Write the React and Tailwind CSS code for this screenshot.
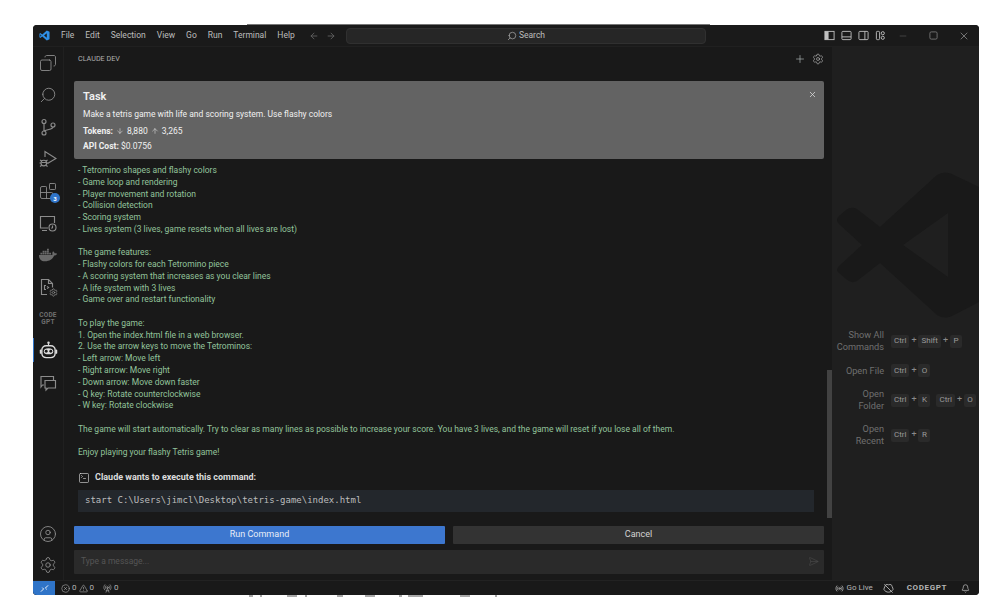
import React from 'react';
import { ArrowLeft, ArrowRight, ArrowDown, ArrowUp, Search, X, Plus, Settings, Minus, Copy, Blocks, CircleUser, CircleX, TriangleAlert, RadioTower, Radio, SendHorizontal, SquareTerminal, Bell } from 'lucide-react';
import { FaDocker } from 'react-icons/fa';

const menus = ['File', 'Edit', 'Selection', 'View', 'Go', 'Run', 'Terminal', 'Help'];

const chatLines = [
  '- Tetromino shapes and flashy colors',
  '- Game loop and rendering',
  '- Player movement and rotation',
  '- Collision detection',
  '- Scoring system',
  '- Lives system (3 lives, game resets when all lives are lost)',
  '',
  'The game features:',
  '- Flashy colors for each Tetromino piece',
  '- A scoring system that increases as you clear lines',
  '- A life system with 3 lives',
  '- Game over and restart functionality',
  '',
  'To play the game:',
  '1. Open the index.html file in a web browser.',
  '2. Use the arrow keys to move the Tetrominos:',
  '- Left arrow: Move left',
  '- Right arrow: Move right',
  '- Down arrow: Move down faster',
  '- Q key: Rotate counterclockwise',
  '- W key: Rotate clockwise',
  '',
  'The game will start automatically. Try to clear as many lines as possible to increase your score. You have 3 lives, and the game will reset if you lose all of them.',
  '',
  'Enjoy playing your flashy Tetris game!',
];

// bits of the page behind the window that stick out under it
const strayMarks = [[249, 4], [260, 2], [287, 10], [305, 2], [337, 6], [365, 10], [399, 3], [408, 15], [460, 10], [495, 2]];

const VsLogo = ({ className }) => (
  <svg viewBox="0 0 100 100" className={className}>
    <path fill="currentColor" fillRule="evenodd" d="M71 4 L96 16 V84 L71 96 L30 58 L12 72 L4 67 V33 L12 28 L30 42 Z M71 29 L46 50 L71 71 Z M12 39 V61 L22 50 Z" />
  </svg>
);

const Watermark = () => (
  <svg viewBox="0 0 147 170" className="absolute left-0 top-[113px] w-[147px] h-[170px] text-[#191919]">
    <path fill="currentColor" fillRule="evenodd" d="M48 67 L105 15 Q113 10 122 15 L147 27 V142 L122 155 Q113 160 105 155 L48 103 L25 121 Q19 124 14 119 L7 113 Q3 110 7 106 L30 85 L7 64 Q3 60 7 56 L14 50 Q19 46 25 49 Z M71 85 L116 53 V117 Z" />
  </svg>
);

const Key = ({ children }) => (
  <span className="h-[13px] min-w-[12px] px-[3px] bg-[#2a2a2a] rounded-[2px] flex items-center justify-center text-[8px] text-[#9a9a9a]">{children}</span>
);

const KeyPlus = () => <span className="w-[9px] text-center text-[9px] text-[#8a8a8a]">+</span>;

const Shortcut = ({ label, children }) => (
  <div className="flex items-center">
    <div className="w-[52px] text-right text-[9.2px] leading-[12px] text-[#6f6f6f] mr-[7px]">{label}</div>
    <div className="flex items-center h-[13px]">{children}</div>
  </div>
);

const GitIcon = () => (
  <svg viewBox="0 0 18 18" className="w-[18px] h-[18px] mt-[14px]" fill="none" stroke="currentColor" strokeWidth="1.15">
    <circle cx="5" cy="3.5" r="2" /><circle cx="5" cy="15" r="2" /><circle cx="14" cy="7" r="2" />
    <path d="M5 5.5V13M14 9c0 2.5-5 2-9 4" />
  </svg>
);

const DebugIcon = () => (
  <svg viewBox="0 0 18 18" className="w-[18px] h-[18px] mt-[14px]" fill="none" stroke="currentColor" strokeWidth="1.15">
    <path d="M6 7V1.5l11 7-8.5 5" />
    <circle cx="4.8" cy="13" r="2.8" />
    <path d="M1 10l1.8 1M8.6 10l-1.8 1M0.5 13h1.5M7.6 13h1.5M1 16.5l1.8-1.3M8.6 16.5l-1.8-1.3M2.5 12.5h4.5" />
  </svg>
);

const RemoteIcon = () => (
  <svg viewBox="0 0 18 18" className="w-[18px] h-[18px] mt-[14px]" fill="none" stroke="currentColor" strokeWidth="1.15">
    <path d="M9 14H1.5V2.5h14V9" />
    <path d="M3 16.5h5" />
    <circle cx="13.5" cy="13.5" r="3.5" />
    <path d="M13.5 11.5v2l-1 1" />
  </svg>
);

const DocGearIcon = () => (
  <div className="relative w-[18px] h-[18px] mt-[14px]">
    <svg viewBox="0 0 18 18" className="w-[18px] h-[18px]" fill="none" stroke="currentColor" strokeWidth="1.15">
      <path d="M8 16.5H2.5V1.5h7l4 4v4" />
      <path d="M9.5 1.5v4h4" />
      <path d="M7 7.5H5.5v4H7M8 8.5l1.5 1-1.5 1" />
    </svg>
    <Settings className="absolute -right-[1px] -bottom-[1px] w-[9px] h-[9px]" strokeWidth={2} />
  </div>
);

const BotIcon = () => (
  <svg viewBox="0 0 20 20" className="w-[19px] h-[19px] text-[#dcdcdc]" fill="none">
    <circle cx="10" cy="1.8" r="1.3" fill="currentColor" />
    <path d="M10 3v2" stroke="currentColor" strokeWidth="1.2" />
    <rect x="3" y="5" width="14" height="12.5" rx="4.5" stroke="currentColor" strokeWidth="1.5" />
    <rect x="0.8" y="9" width="1.8" height="4.5" rx="0.9" fill="currentColor" />
    <rect x="17.4" y="9" width="1.8" height="4.5" rx="0.9" fill="currentColor" />
    <path d="M5 11c0-2.5 2-3.5 5-3.5s5 1 5 3.5-2 3-5 3-5-.5-5-3z" fill="currentColor" />
    <circle cx="7.6" cy="10.8" r="1.5" fill="#191919" />
    <circle cx="12.4" cy="10.8" r="1.5" fill="#191919" />
  </svg>
);

const ChatIcon = () => (
  <svg viewBox="0 0 18 18" className="w-[18px] h-[18px] mt-[12px]" fill="none" stroke="currentColor" strokeWidth="1.15">
    <path d="M5 11H3.5l-1.5 2V2.5h12.5V6" />
    <path d="M6 6.5h10.5V14H9l-2 2v-2H6z" />
  </svg>
);

const RemoteStatusIcon = () => (
  <svg viewBox="0 0 10 10" className="w-[9px] h-[9px]" fill="none" stroke="currentColor" strokeWidth="1">
    <path d="M1 8.5 4 5.5 2.5 4M9 1.5 6 4.5 7.5 6" />
  </svg>
);

const CopilotOffIcon = () => (
  <svg viewBox="0 0 12 12" className="w-[11px] h-[11px] ml-[10px]" fill="none" stroke="currentColor" strokeWidth="1">
    <path d="M2 4c0-2 2-3 4-2 2-1 4 0 4 2 .5 1 1 2 1 3-1 2-3 3-5 3s-4-1-5-3c0-1 .5-2 1-3z" />
    <path d="M1.5 1.5l9 9" />
  </svg>
);

export default function App() {
  return (
    <div className="relative w-[1000px] h-[613px] bg-white pt-[25px] pl-[33px] overflow-hidden" style={{ fontFamily: 'Roboto, sans-serif' }}>
      <div className="absolute left-[247px] top-[24px] w-[463px] h-[1px] bg-[#777]"></div>
      {strayMarks.map(([x, w]) => (
        <div key={x} className="absolute top-[595px] h-[2px] bg-[#aaa]" style={{ left: x, width: w }}></div>
      ))}

      <div className="w-[946px] h-[570px] bg-[#191919] rounded-[4px] overflow-hidden flex flex-col">
        {/* title bar */}
        <div className="h-[22px] shrink-0 flex items-center bg-[#1a1a1a] border-b border-[#202020] text-[#bdbdbd] text-[8.5px]">
          <VsLogo className="w-[11px] h-[11px] text-[#2f8fe6] ml-[6px] mr-[11px]" />
          <div className="flex gap-[11px] w-[231px]">
            {menus.map(m => <span key={m}>{m}</span>)}
          </div>
          <ArrowLeft className="w-[10px] h-[10px] text-[#666] ml-[17px]" />
          <ArrowRight className="w-[10px] h-[10px] text-[#666] ml-[7px]" />
          <div className="ml-[10px] w-[360px] h-[16px] rounded-[4px] bg-[#262626] border border-[#303030] flex items-center justify-center gap-[2px]">
            <Search className="w-[10px] h-[10px] -scale-x-100" strokeWidth={1.5} />
            <span>Search</span>
          </div>
          <div className="ml-auto flex items-center gap-[6px] text-[#c0c0c0]">
            <svg viewBox="0 0 12 12" className="w-[11px] h-[11px]"><rect x="1" y="1.5" width="10" height="9" fill="none" stroke="currentColor" /><rect x="1" y="1.5" width="4" height="9" fill="currentColor" /></svg>
            <svg viewBox="0 0 12 12" className="w-[11px] h-[11px]"><rect x="1" y="1.5" width="10" height="9" rx="1" fill="none" stroke="currentColor" /><path d="M1 7.5h10" stroke="currentColor" /></svg>
            <svg viewBox="0 0 12 12" className="w-[11px] h-[11px]"><rect x="1" y="1.5" width="10" height="9" rx="1" fill="none" stroke="currentColor" /><path d="M7.5 1.5v9" stroke="currentColor" /></svg>
            <svg viewBox="0 0 12 12" className="w-[11px] h-[11px]"><rect x="1.5" y="1.5" width="3.5" height="9" rx="1" fill="none" stroke="currentColor" /><circle cx="8.5" cy="3.5" r="1.7" fill="none" stroke="currentColor" /><circle cx="8.5" cy="8.5" r="1.7" fill="none" stroke="currentColor" /></svg>
          </div>
          <Minus className="w-[10px] h-[10px] text-[#666] ml-[12px]" strokeWidth={1.25} />
          <svg viewBox="0 0 10 10" className="w-[9px] h-[9px] text-[#777] ml-[21px]" fill="none" stroke="currentColor"><rect x="1" y="1" width="8" height="8" rx="1.5" /></svg>
          <X className="w-[12px] h-[12px] text-[#aaa] ml-[20px] mr-[9px]" strokeWidth={1.25} />
        </div>

        <div className="flex-1 flex min-h-0">
          {/* activity bar */}
          <div className="w-[31px] shrink-0 flex flex-col items-center bg-[#191919] border-r border-[#202020] text-[#8c8c8c] pt-[7px]">
            <Copy className="w-[18px] h-[18px] -scale-x-100" strokeWidth={1.2} />
            <Search className="w-[18px] h-[18px] mt-[14px] -scale-x-100" strokeWidth={1.2} />
            <GitIcon />
            <DebugIcon />
            <div className="relative mt-[14px] w-[18px] h-[18px]">
              <Blocks className="w-[18px] h-[18px]" strokeWidth={1.2} />
              <span className="absolute -right-[3px] -bottom-[3px] w-[10px] h-[10px] rounded-full bg-[#2f74c8] text-white text-[6px] font-bold flex items-center justify-center">3</span>
            </div>
            <RemoteIcon />
            <FaDocker className="w-[18px] h-[18px] mt-[14px] text-[#6a6a6a]" />
            <DocGearIcon />
            <div className="mt-[16px] h-[14px] text-[6.5px] leading-[6.5px] font-bold text-[#6f6f6f] flex flex-col items-center tracking-[0.2px]"><span>CODE</span><span>GPT</span></div>
            <div className="mt-[12px] w-full h-[24px] flex items-center justify-center border-l border-[#2f74c8]">
              <BotIcon />
            </div>
            <ChatIcon />
            <CircleUser className="w-[18px] h-[18px] mt-auto" strokeWidth={1.2} />
            <Settings className="w-[18px] h-[18px] mt-[13px] mb-[6px]" strokeWidth={1.2} />
          </div>

          {/* claude dev panel */}
          <div className="w-[768px] shrink-0 flex flex-col bg-[#191919] relative">
            <div className="h-[22px] shrink-0 flex items-center pl-[14px] pr-[8px] text-[7.2px] text-[#b0b0b0] mt-[1px]">
              <span>CLAUDE DEV</span>
              <Plus className="w-[12px] h-[12px] ml-auto text-[#b8c0c0]" strokeWidth={1.25} />
              <Settings className="w-[12px] h-[12px] ml-[6px] text-[#bdbdbd]" strokeWidth={1.25} />
            </div>
            <div className="ml-[10px] mr-[8px] mt-[11px] h-[78px] shrink-0 bg-[#636363] rounded-[2px] px-[9px] pt-[8px] relative text-[#f0f0f0] text-[8.5px]">
              <div className="text-[11px] leading-[15px] font-semibold">Task</div>
              <div className="leading-[12px] mt-[4px]">Make a tetris game with life and scoring system. Use flashy colors</div>
              <div className="leading-[12px] mt-[5px] flex items-center">
                <span className="font-bold">Tokens:</span>
                <ArrowDown className="w-[8px] h-[8px] ml-[3px]" strokeWidth={1.5} />
                <span className="ml-[3px]">8,880</span>
                <ArrowUp className="w-[8px] h-[8px] ml-[3px]" strokeWidth={1.5} />
                <span className="ml-[3px]">3,265</span>
              </div>
              <div className="leading-[12px] mt-[3px]"><span className="font-bold">API Cost:</span> $0.0756</div>
              <X className="absolute right-[7px] top-[9px] w-[9px] h-[9px] text-[#ddd]" />
            </div>
            <div className="ml-[14px] mt-[6px] text-[8.5px] leading-[11.77px] text-[#93c49b]">
              {chatLines.map((line, i) => <div key={i} className="h-[11.77px] whitespace-nowrap">{line}</div>)}
            </div>
            <div className="ml-[14px] mt-[12px] flex items-center gap-[5px] text-[9px] font-bold text-[#dcdcdc]">
              <SquareTerminal className="w-[12px] h-[12px]" strokeWidth={1.25} />
              <span>Claude wants to execute this command:</span>
            </div>
            <div className="ml-[14px] mt-[5px] w-[736px] h-[22px] bg-[#23272c] flex items-center pl-[7px] text-[9px] text-[#bdbdbd]" style={{ fontFamily: '"DejaVu Sans Mono", monospace' }}>
              start C:\Users\jimcl\Desktop\tetris-game\index.html
            </div>
            <div className="ml-[10px] mr-[8px] mt-[14px] flex gap-[8px] text-[9px]">
              <div className="flex-1 h-[18px] rounded-[1px] bg-[#3d77cf] text-[#e8eef8] flex items-center justify-center">Run Command</div>
              <div className="flex-1 h-[18px] rounded-[1px] bg-[#333333] text-[#d4d4d4] flex items-center justify-center">Cancel</div>
            </div>
            <div className="ml-[10px] mr-[8px] mt-[6px] h-[24px] bg-[#2a2a2a] rounded-[1px] flex items-center pl-[7px] pr-[5px] text-[8.5px] text-[#555]">
              <span>Type a message...</span>
              <SendHorizontal className="w-[11px] h-[11px] ml-auto text-[#555]" strokeWidth={1} />
            </div>
            <div className="absolute right-[-1px] top-[323px] w-[6px] h-[148px] bg-[#424242]"></div>
          </div>

          {/* editor watermark */}
          <div className="flex-1 bg-[#1f1f1f] relative overflow-hidden">
            <Watermark />
            <div className="absolute left-0 top-[282px] flex flex-col gap-[11px]">
              <Shortcut label={<>Show All<br />Commands</>}><Key>Ctrl</Key><KeyPlus /><Key>Shift</Key><KeyPlus /><Key>P</Key></Shortcut>
              <Shortcut label="Open File"><Key>Ctrl</Key><KeyPlus /><Key>O</Key></Shortcut>
              <Shortcut label={<>Open<br />Folder</>}><Key>Ctrl</Key><KeyPlus /><Key>K</Key><span className="w-[6px]"></span><Key>Ctrl</Key><KeyPlus /><Key>O</Key></Shortcut>
              <Shortcut label={<>Open<br />Recent</>}><Key>Ctrl</Key><KeyPlus /><Key>R</Key></Shortcut>
            </div>
          </div>
        </div>

        {/* status bar */}
        <div className="h-[15px] shrink-0 flex items-center bg-[#191919] border-t border-[#222] text-[8px] text-[#b5b5b5]">
          <div className="w-[22px] h-full bg-[#2f74c8] flex items-center justify-center text-white">
            <RemoteStatusIcon />
          </div>
          <CircleX className="w-[9px] h-[9px] ml-[6px]" strokeWidth={1.5} />
          <span className="ml-[2px]">0</span>
          <TriangleAlert className="w-[9px] h-[9px] ml-[2px]" strokeWidth={1.5} />
          <span className="ml-[2px]">0</span>
          <RadioTower className="w-[9px] h-[9px] ml-[9px]" strokeWidth={1.5} />
          <span className="ml-[2px]">0</span>
          <Radio className="w-[9px] h-[9px] ml-auto" />
          <span className="ml-[2px]">Go Live</span>
          <CopilotOffIcon />
          <span className="ml-[13px] text-[8px] font-bold tracking-[0.6px]">CODEGPT</span>
          <Bell className="w-[9px] h-[9px] ml-[14px] mr-[9px]" />
        </div>
      </div>
    </div>
  );
}
